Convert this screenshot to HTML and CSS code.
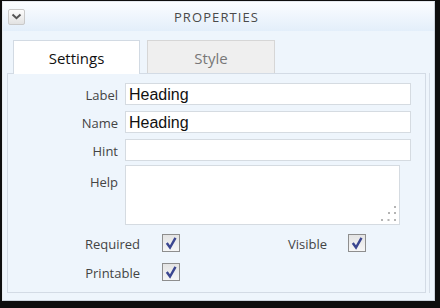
FILE: index.html
```html
<!DOCTYPE html>
<html lang="en">
<head>
    <meta charset="UTF-8">
    <title>Properties</title>
    <link rel="stylesheet" href="styles.css">
</head>
<body>
    <div class="window">
        <div class="header">
            <button type="button" class="collapse">
                <svg width="11" height="7" viewBox="0 0 11 7"><path d="M1.5 1.5 L5.5 5.2 L9.5 1.5" fill="none" stroke="#555" stroke-width="2"/></svg>
            </button>
            <span class="title">PROPERTIES</span>
            <span></span>
        </div>

        <div class="tabs">
            <div class="tab active">Settings</div>
            <div class="tab">Style</div>
        </div>

        <div class="panel">
            <div class="fields">
                <label>Label</label>
                <input type="text" value="Heading">
                <label>Name</label>
                <input type="text" value="Heading">
                <label>Hint</label>
                <input type="text" value="">
                <label class="top">Help</label>
                <div class="help">
                    <!-- grip de redimensionar -->
                    <svg class="grip" width="16" height="16" viewBox="0 0 16 16">
                        <g fill="#b4b4b4">
                            <rect x="13" y="0" width="2" height="2"/>
                            <rect x="7" y="6" width="2" height="2"/>
                            <rect x="13" y="6" width="2" height="2"/>
                            <rect x="0" y="13" width="2" height="2"/>
                            <rect x="6.5" y="13" width="2" height="2"/>
                            <rect x="13" y="13" width="2" height="2"/>
                        </g>
                    </svg>
                </div>
            </div>

            <div class="checks">
                <span class="check-label">Required</span>
                <span class="box"><svg width="16" height="16" viewBox="0 0 16 16"><path d="M3.8 8 L7 12.5 L12.5 2.8" fill="none" stroke="#3b4690" stroke-width="2.4"/></svg></span>
                <span class="check-label">Visible</span>
                <span class="box"><svg width="16" height="16" viewBox="0 0 16 16"><path d="M3.8 8 L7 12.5 L12.5 2.8" fill="none" stroke="#3b4690" stroke-width="2.4"/></svg></span>
                <span class="check-label">Printable</span>
                <span class="box"><svg width="16" height="16" viewBox="0 0 16 16"><path d="M3.8 8 L7 12.5 L12.5 2.8" fill="none" stroke="#3b4690" stroke-width="2.4"/></svg></span>
            </div>
        </div>
    </div>
</body>
</html>
```

FILE: styles.css
```css
* {
    box-sizing: border-box;
}

body {
    margin: 0;
    width: 440px;
    height: 308px;
    padding: 1px 5px 7px 2px;
    background-color: #0e0e0e;
    font-family: 'Open Sans', sans-serif;
    overflow: hidden;
}

.window {
    width: 433px;
    height: 300px;
    border: 1px solid #cbd3dc;
    border-top-color: #e4e8ee;
    border-left-color: #e8ecf0;
    background-color: #eef5fc;
    display: flex;
    flex-direction: column;
}

.header {
    height: 29px;
    display: grid;
    grid-template-columns: 1fr auto 1fr;
    align-items: center;
    background: linear-gradient(#fbfdff, #e3eefa);
}

.collapse {
    width: 17px;
    height: 16px;
    margin-left: 5px;
    padding: 0;
    border: 1px solid #c9c9c9;
    border-radius: 2px;
    background: linear-gradient(#fdfdfd, #e2e2e2);
    display: flex;
    justify-content: center;
    align-items: center;
}

.title {
    font-size: 13px;
    letter-spacing: 1.1px;
    color: #4a4a4a;
    margin-left: -4px;
}

.tabs {
    display: flex;
    align-items: flex-start;
    gap: 7px;
    margin: 9px 0 -1px 10px;
    height: 34px;
}

.tab {
    width: 128px;
    height: 33px;
    border: 1px solid #d6d6d6;
    border-bottom: none;
    background-color: #efefef;
    color: #777;
    font-size: 15px;
    display: flex;
    justify-content: center;
    align-items: center;
    padding-top: 1px;
}

.tab.active {
    width: 127px;
    height: 34px;
    background-color: #fff;
    border-color: #d2dae3;
    color: #111;
    position: relative;
    z-index: 1;
}

.panel {
    width: 419px;
    height: 220px;
    margin-left: 4px;
    padding: 9px 14px 0 0;
    border: 1px solid #d3dbe5;
    background-color: #eef5fc;
    box-shadow: 3px 0 0 #eef5fc, 4px 0 0 #d6dee8;
}

.fields {
    display: grid;
    grid-template-columns: 110px 1fr;
    column-gap: 7px;
    row-gap: 6px;
    align-items: center;
}

.fields label {
    text-align: right;
    font-size: 13px;
    color: #444;
    padding-top: 2px;
}

.fields label.top {
    align-self: start;
    padding-top: 6px;
}

.fields input {
    height: 22px;
    margin: 0;
    padding: 1px 3px 0;
    border: 1px solid #d5dbe1;
    background-color: #fff;
    font-family: 'Liberation Sans', Arial, sans-serif;
    font-size: 16px;
    color: #111;
    outline: none;
}

.help {
    width: 275px;
    height: 60px;
    margin-top: -2px;
    border: 1px solid #d5dbe1;
    background-color: #fff;
    position: relative;
}

.grip {
    position: absolute;
    right: 2px;
    bottom: 2px;
}

.checks {
    display: grid;
    grid-template-columns: 132px 40px 147px 39px;
    row-gap: 9px;
    margin-top: 8px;
    align-items: center;
}

.check-label {
    text-align: right;
    font-size: 13px;
    color: #444;
    padding-top: 2px;
}

.box {
    width: 18px;
    height: 18px;
    justify-self: end;
    border: 1px solid #8e8e8e;
    background: linear-gradient(#e4e4e4, #f6f6f6);
    display: flex;
    justify-content: center;
    align-items: center;
}
```
